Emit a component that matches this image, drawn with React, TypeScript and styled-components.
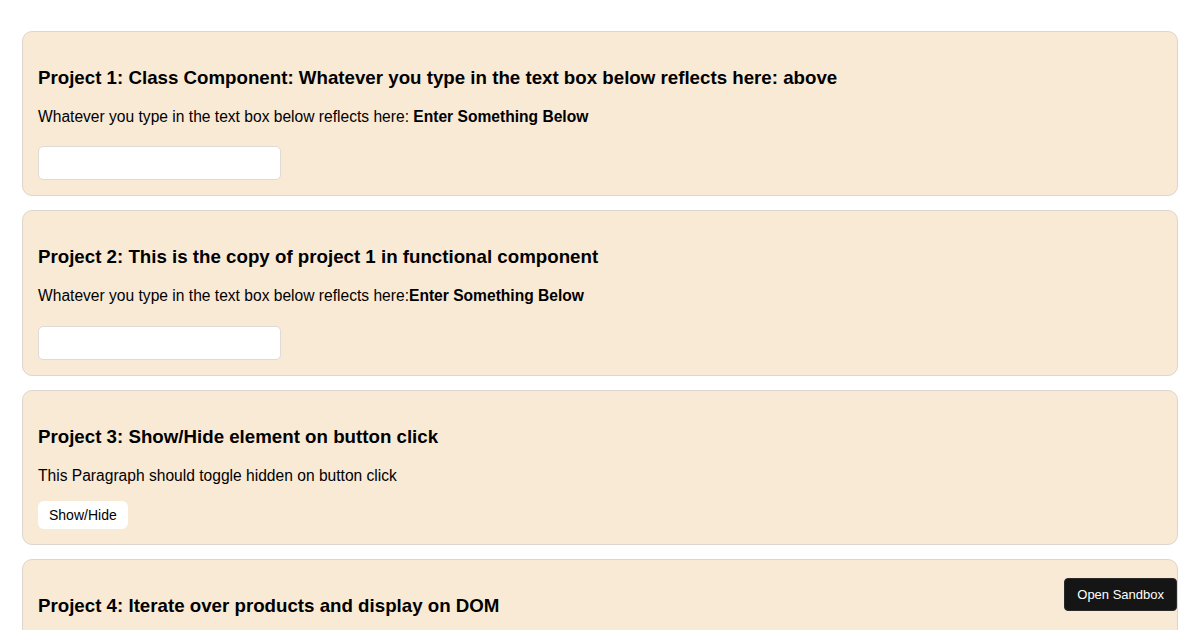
import React, { useState } from "react";
import styled, { createGlobalStyle } from "styled-components";

const GlobalStyle = createGlobalStyle`
  body {
    margin: 8px;
    font-family: "Liberation Sans", Arial, sans-serif;
    color: #000;
    background: #fff;
  }
`;

const Page = styled.div`
  display: flex;
  flex-direction: column;
  gap: 14px;
  padding: 23px 14px 0;
`;

const Card = styled.section`
  background: #f9ead6;
  border: 1px solid #dcd6ce;
  border-radius: 10px;
  padding: 15px;
`;

const Title = styled.h3`
  font-size: 18.72px;
  font-weight: bold;
  margin: 20px 0 19px;
`;

const Text = styled.p<{ $hidden?: boolean }>`
  font-size: 15.6px;
  margin: 0;
  visibility: ${(p) => (p.$hidden ? "hidden" : "visible")};
`;

const Field = styled.input`
  display: block;
  box-sizing: border-box;
  width: 243px;
  height: 34px;
  margin-top: 20.4px;
  border: 1px solid #dedad5;
  border-radius: 5px;
  background: #fff;
  font: inherit;
  padding: 0 8px;
`;

const Toggle = styled.button`
  display: block;
  height: 28px;
  padding: 0 11px;
  border: none;
  border-radius: 6px;
  background: #fff;
  font-family: "Liberation Sans", Arial, sans-serif;
  font-size: 14px;
  color: #000;
  margin: 16px 0 0.4px;
`;

const Products = styled.ul`
  margin: 0;
  padding-left: 20px;
`;

const SandboxButton = styled.a`
  position: fixed;
  right: 23px;
  bottom: 19px;
  box-sizing: border-box;
  height: 33px;
  padding: 0 12px 0 12px;
  display: flex;
  align-items: center;
  background: #151515;
  color: #fff;
  border: 1px solid #2a2a2a;
  border-radius: 4px;
  font-size: 13px;
  text-decoration: none;
`;

export default function App() {
  const [first, setFirst] = useState("");
  const [second, setSecond] = useState("");
  const [shown, setShown] = useState(true);

  return (
    <>
      <GlobalStyle />
      <Page>
        <Card>
          <Title>
            Project 1: Class Component: Whatever you type in the text box below reflects here: {first || "above"}
          </Title>
          <Text>
            Whatever you type in the text box below reflects here: <b>{first || "Enter Something Below"}</b>
          </Text>
          <Field value={first} onChange={(e) => setFirst(e.target.value)} />
        </Card>
        <Card>
          <Title>Project 2: This is the copy of project 1 in functional component</Title>
          <Text>
            Whatever you type in the text box below reflects here:<b>{second || "Enter Something Below"}</b>
          </Text>
          <Field value={second} onChange={(e) => setSecond(e.target.value)} />
        </Card>
        <Card>
          <Title>Project 3: Show/Hide element on button click</Title>
          <Text $hidden={!shown}>This Paragraph should toggle hidden on button click</Text>
          <Toggle onClick={() => setShown(!shown)}>Show/Hide</Toggle>
        </Card>
        <Card>
          <Title>Project 4: Iterate over products and display on DOM</Title>
          <Products>
            <li>Product 1</li>
            <li>Product 2</li>
            <li>Product 3</li>
          </Products>
        </Card>
      </Page>
      <SandboxButton href="#">Open Sandbox</SandboxButton>
    </>
  );
}
